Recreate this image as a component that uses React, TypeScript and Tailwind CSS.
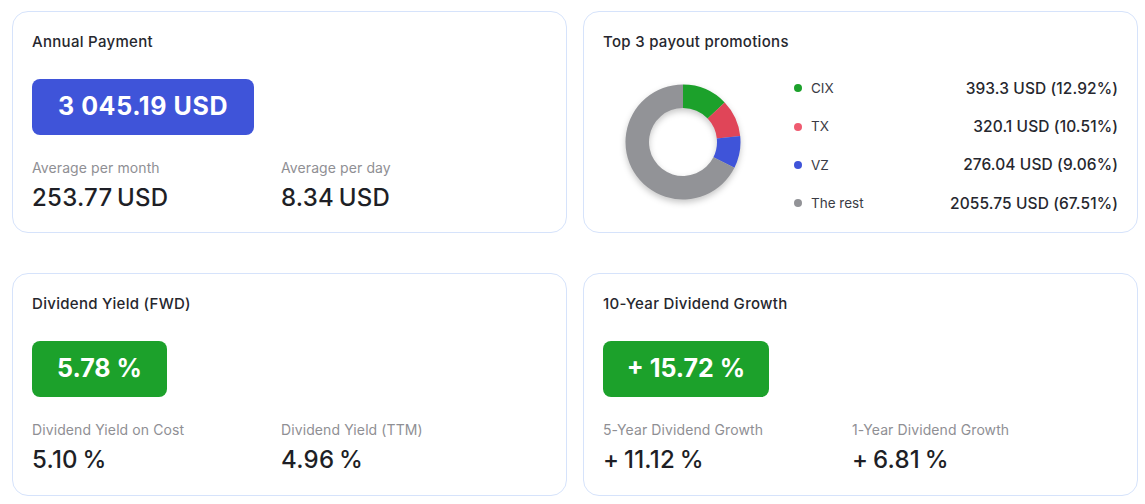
import React from 'react';

const FONT = "font-['Inter','Noto_Sans',sans-serif]";

const legend = [
  { name: 'CIX', value: '393.3 USD (12.92%)', dot: 'bg-[#1ca12b]' },
  { name: 'TX', value: '320.1 USD (10.51%)', dot: 'bg-[#ef5b70]' },
  { name: 'VZ', value: '276.04 USD (9.06%)', dot: 'bg-[#3f54d9]' },
  { name: 'The rest', value: '2055.75 USD (67.51%)', dot: 'bg-[#929397]' },
];

const slices = [
  { from: 0, to: 46.5, color: '#1ca12b' },
  { from: 46.5, to: 84, color: '#e04558' },
  { from: 84, to: 116.6, color: '#3f54d9' },
  { from: 116.6, to: 360, color: '#929397' },
];

const point = (r: number, deg: number) => {
  const a = (deg * Math.PI) / 180;
  return `${(60 + r * Math.sin(a)).toFixed(2)} ${(60 - r * Math.cos(a)).toFixed(2)}`;
};

const slicePath = (from: number, to: number) => {
  const big = to - from > 180 ? 1 : 0;
  return `M${point(57.5, from)}A57.5 57.5 0 ${big} 1 ${point(57.5, to)}L${point(34, to)}A34 34 0 ${big} 0 ${point(34, from)}Z`;
};

const Donut = () => (
  <svg width="120" height="124" viewBox="0 0 120 124" className="shrink-0 overflow-visible">
    <g style={{ filter: 'drop-shadow(0 3px 3px rgba(0,0,0,0.22))' }}>
      {slices.map((s) => (
        <path key={s.color} d={slicePath(s.from, s.to)} fill={s.color} />
      ))}
    </g>
  </svg>
);

const Stat = ({ label, value }: { label: string; value: string }) => (
  <div className="w-[249px]">
    <div className="text-[14px] leading-[16px] tracking-[0.1px] text-[#8f8f94]">{label}</div>
    <div className="mt-[7px] text-[24px] leading-[30px] font-medium tracking-[0.25px] [word-spacing:-2px] text-[#1e1f26]">
      {value}
    </div>
  </div>
);

const Title = ({ children }: { children: React.ReactNode }) => (
  <h3 className="text-[15px] leading-[18px] font-medium tracking-[0.3px] text-[#26272e]">{children}</h3>
);

const StatCard = ({
  title,
  badge,
  color,
  badgeWidth,
  stats,
}: {
  title: string;
  badge: string;
  color: string;
  badgeWidth: string;
  stats: { label: string; value: string }[];
}) => (
  <div className="rounded-2xl border border-[#d6e3fb] bg-white px-[19px] pt-[21px]">
    <Title>{title}</Title>
    <div
      className={`mt-[28px] flex h-[56px] items-center justify-center rounded-lg text-[25px] font-bold text-white ${color} ${badgeWidth}`}
    >
      {badge}
    </div>
    <div className="mt-[25px] flex">
      {stats.map((s) => (
        <Stat key={s.label} label={s.label} value={s.value} />
      ))}
    </div>
  </div>
);

export default function App() {
  return (
    <div className={`${FONT} min-h-[504px] bg-white pt-[11px] pr-[7px] pl-[12px]`}>
      <div className="grid grid-cols-2 grid-rows-[222px_223px] gap-x-4 gap-y-10">
        <StatCard
          title="Annual Payment"
          badge="3 045.19 USD"
          color="bg-[#3f54d9] tracking-[0.6px]"
          badgeWidth="w-[222px]"
          stats={[
            { label: 'Average per month', value: '253.77 USD' },
            { label: 'Average per day', value: '8.34 USD' },
          ]}
        />

        <div className="rounded-2xl border border-[#d6e3fb] bg-white px-[19px] pt-[21px]">
          <Title>Top 3 payout promotions</Title>
          <div className="mt-[12px] flex items-start">
            <div className="mt-[19px] ml-[20px]">
              <Donut />
            </div>
            <div className="mt-[6px] ml-[51px] flex-1">
              {legend.map((item) => (
                <div key={item.name} className="flex h-[38.4px] items-center justify-between">
                  <div className="flex items-center text-[13.5px] text-[#3a3b45]">
                    <span className={`mr-[9px] h-2 w-2 rounded-full ${item.dot}`} />
                    {item.name}
                  </div>
                  <div className="text-[15.5px] font-medium tracking-[0.1px] text-[#26272e]">{item.value}</div>
                </div>
              ))}
            </div>
          </div>
        </div>

        <StatCard
          title="Dividend Yield (FWD)"
          badge="5.78 %"
          color="bg-[#1ca12b]"
          badgeWidth="w-[135px]"
          stats={[
            { label: 'Dividend Yield on Cost', value: '5.10 %' },
            { label: 'Dividend Yield (TTM)', value: '4.96 %' },
          ]}
        />

        <StatCard
          title="10-Year Dividend Growth"
          badge="+ 15.72 %"
          color="bg-[#1ca12b]"
          badgeWidth="w-[166px]"
          stats={[
            { label: '5-Year Dividend Growth', value: '+ 11.12 %' },
            { label: '1-Year Dividend Growth', value: '+ 6.81 %' },
          ]}
        />
      </div>
    </div>
  );
}
